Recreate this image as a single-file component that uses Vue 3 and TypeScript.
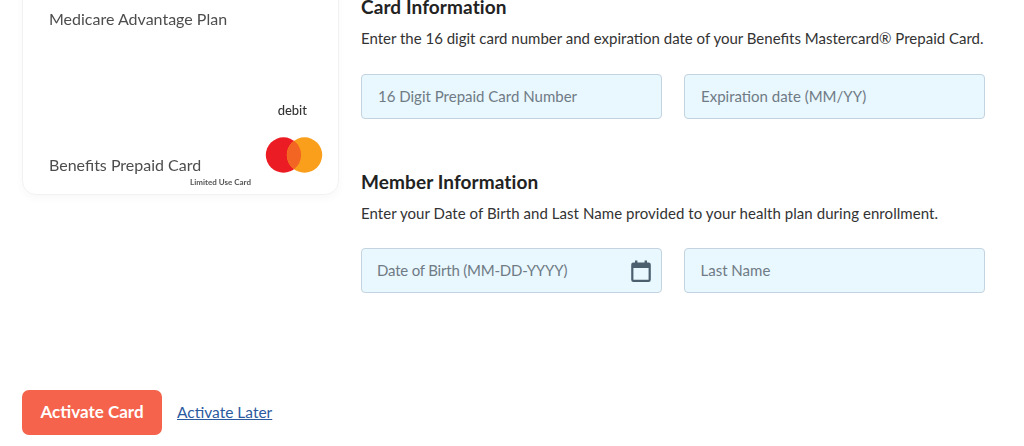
<script setup lang="ts">
interface Field { placeholder: string; icon?: boolean }
const cardFields: Field[] = [
  { placeholder: '16 Digit Prepaid Card Number' },
  { placeholder: 'Expiration date (MM/YY)' },
]
const memberFields: Field[] = [
  { placeholder: 'Date of Birth (MM-DD-YYYY)', icon: true },
  { placeholder: 'Last Name' },
]
</script>

<template>
  <main class="page">
    <div class="top">
      <aside class="card">
        <div class="plan">Medicare Advantage Plan</div>
        <div class="debit">debit</div>
        <div class="card-bottom">
          <div class="card-name">
            <div class="benefits">Benefits Prepaid Card</div>
            <div class="limited">Limited Use Card</div>
          </div>
          <svg class="mc" width="58" height="36" viewBox="0 0 58 36" aria-hidden="true">
            <circle cx="18.5" cy="18" r="17.7" fill="#ec1c24" />
            <circle cx="39.5" cy="18" r="17.7" fill="#f99f1c" />
            <path d="M29 3.8a17.7 17.7 0 0 1 0 28.4a17.7 17.7 0 0 1 0-28.4z" fill="#f26522" />
          </svg>
        </div>
      </aside>
      <div class="forms">
        <section class="group first">
          <h2>Card Information</h2>
          <p>Enter the 16 digit card number and expiration date of your Benefits Mastercard® Prepaid Card.</p>
          <div class="row">
            <div v-for="f in cardFields" :key="f.placeholder" class="field">
              <span>{{ f.placeholder }}</span>
            </div>
          </div>
        </section>
        <section class="group second">
          <h2>Member Information</h2>
          <p>Enter your Date of Birth and Last Name provided to your health plan during enrollment.</p>
          <div class="row">
            <div v-for="f in memberFields" :key="f.placeholder" class="field" :class="{ dated: f.icon }">
              <span>{{ f.placeholder }}</span>
              <svg v-if="f.icon" class="cal" width="20" height="22" viewBox="0 0 20 22" aria-hidden="true">
                <path d="M4 0.5h2.4v2H13.6v-2H16v2h1.6A2.2 2.2 0 0 1 19.8 4.7v15.1a2.2 2.2 0 0 1-2.2 2.2H2.4A2.2 2.2 0 0 1 0.2 19.8V4.7A2.2 2.2 0 0 1 2.4 2.5H4zM2.4 8v11.8H17.6V8z" fill="#4c5f6e" fill-rule="evenodd" />
              </svg>
            </div>
          </div>
        </section>
      </div>
    </div>
    <div class="actions">
      <button class="primary" type="button">Activate Card</button>
      <a class="later" href="#">Activate Later</a>
    </div>
  </main>
</template>

<style scoped>
.page {
  width: 1024px;
  height: 446px;
  overflow: hidden;
  font-family: Lato, "Open Sans", sans-serif;
  background: #fff;
  color: #2b2b2b;
  box-sizing: border-box;
  padding-left: 22px;
}
.top {
  display: flex;
  gap: 22px;
  height: 390px;
}
.card {
  width: 317px;
  height: 211px;
  margin-top: -16px;
  box-sizing: border-box;
  border: 1px solid #f1f1f1;
  border-radius: 14px;
  box-shadow: 0 3px 8px rgba(0, 0, 0, 0.03);
  padding: 25px 15px 8px 26px;
  display: flex;
  flex-direction: column;
  color: #4d4d4d;
  filter: blur(0.3px);
}
.plan {
  font-size: 16px;
  line-height: 18px;
}
.debit {
  margin-top: 74px;
  align-self: flex-end;
  margin-right: 16px;
  font-size: 13px;
  line-height: 16px;
  font-weight: 500;
  color: #333;
}
.card-bottom {
  margin-top: 19px;
  display: flex;
  justify-content: space-between;
}
.card-name {
  padding-top: 19px;
  width: 202px;
}
.benefits {
  font-size: 16px;
  line-height: 18px;
}
.limited {
  margin-top: 4px;
  text-align: right;
  font-size: 8px;
  line-height: 9px;
  font-weight: 700;
  color: #555;
}
.forms {
  width: 624px;
  flex: none;
}
.group h2 {
  margin: 0;
  font-size: 19px;
  line-height: 14px;
  letter-spacing: 0.1px;
  font-weight: 700;
  color: #222;
}
.group p {
  margin: 14px 0 0;
  font-size: 15px;
  line-height: 20px;
  color: #333;
  white-space: nowrap;
}
.second {
  margin-top: 56px;
}
.second p {
  letter-spacing: 0.06px;
}
.row {
  display: flex;
  gap: 22px;
  margin-top: 25px;
}
.first .row {
  margin-top: 26px;
}
.field {
  flex: 1;
  height: 45px;
  box-sizing: border-box;
  border: 1px solid #c3d3df;
  border-radius: 4px;
  background: #e9f7fe;
  padding: 0 10px 2px 16px;
  display: flex;
  align-items: center;
  justify-content: space-between;
  font-size: 15px;
  color: #6f7b85;
}
.dated {
  padding-left: 15px;
  letter-spacing: -0.2px;
}
.cal {
  margin-top: 2px;
}
.actions {
  display: flex;
  align-items: center;
  gap: 15px;
  height: 45px;
}
.primary {
  width: 140px;
  height: 45px;
  border: 0;
  border-radius: 7px;
  background: #f5634c;
  color: #fff;
  font-family: inherit;
  font-size: 17px;
  font-weight: 700;
  padding: 0 0 2px;
}
.later {
  font-size: 15.5px;
  line-height: 18px;
  margin-bottom: 2px;
  color: #2c5aa0;
  text-decoration: underline;
}
</style>
